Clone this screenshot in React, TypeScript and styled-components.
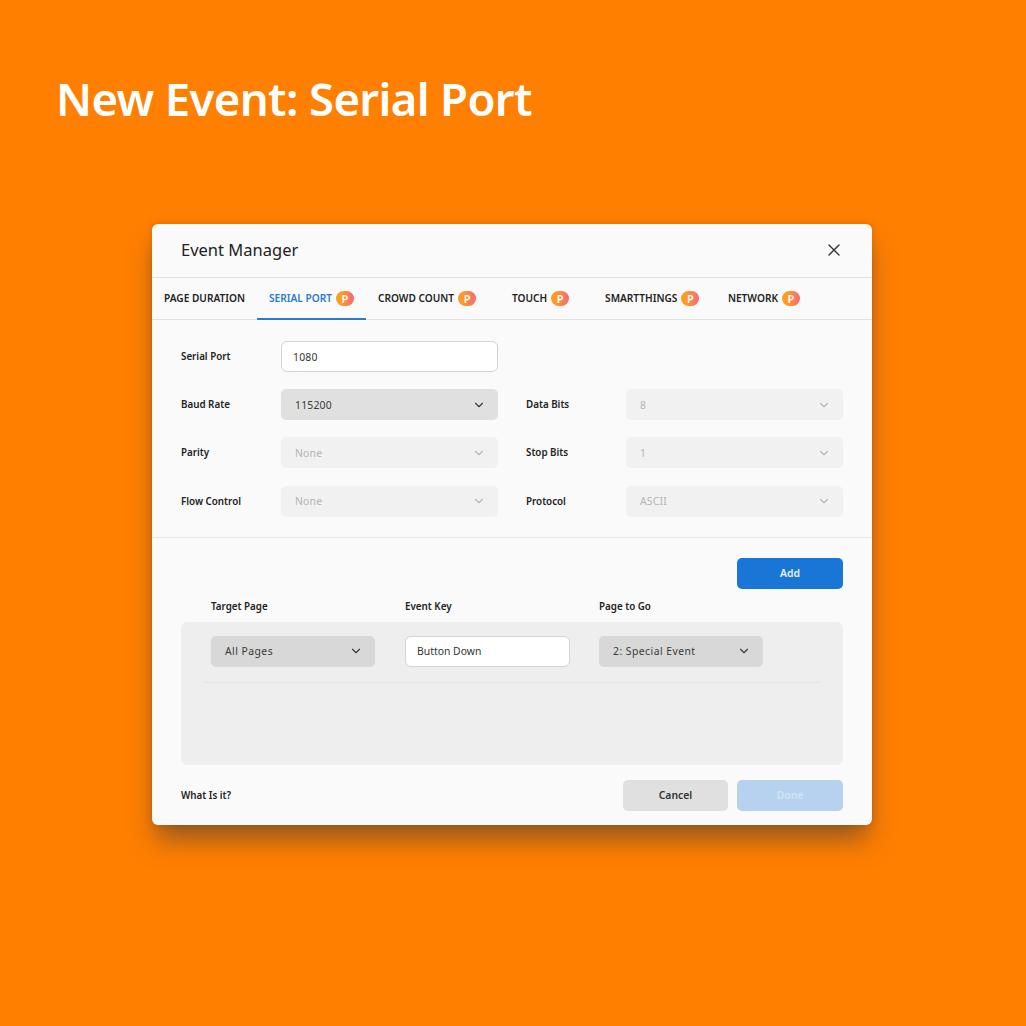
import React from 'react'
import styled, { createGlobalStyle } from 'styled-components'
import { ChevronDown, X } from 'lucide-react'

const FONT = `"Noto Sans", "Open Sans", sans-serif`

const GlobalStyle = createGlobalStyle`
  html, body {
    margin: 0;
    padding: 0;
    background: #ff7f00;
  }
  * {
    box-sizing: border-box;
  }
`

const Page = styled.div`
  width: 1026px;
  height: 1026px;
  overflow: hidden;
  background: #ff7f00;
  padding: 65px 0 0 56px;
  font-family: ${FONT};
`

const Title = styled.h1`
  margin: 0 0 92px;
  height: 67px;
  font-size: 45.5px;
  line-height: 66px;
  font-weight: 600;
  letter-spacing: -0.65px;
  color: #fff;
`

const Modal = styled.div`
  width: 720px;
  height: 601px;
  margin-left: 96px;
  background: #fafafa;
  border-radius: 6px;
  box-shadow: 0 18px 26px -4px rgba(80, 65, 50, 0.62), 0 0 6px rgba(120, 70, 0, 0.25);
  display: flex;
  flex-direction: column;
`

const Header = styled.div`
  height: 54px;
  padding: 0 28px 2px 29px;
  display: flex;
  align-items: center;
  justify-content: space-between;
  border-bottom: 1px solid #e2e2e2;
`

const ModalTitle = styled.div`
  font-size: 16.5px;
  font-weight: 400;
  color: #222;
`

const CloseIcon = styled(X)`
  width: 20px;
  height: 20px;
  color: #333;
  stroke-width: 1.6;
`

const TabBar = styled.div`
  height: 42px;
  display: flex;
  border-bottom: 1px solid #e2e2e2;
`

const Tab = styled.div<{ $active?: boolean }>`
  min-width: 105px;
  height: 42px;
  padding: 0 12px;
  display: flex;
  align-items: center;
  justify-content: center;
  gap: 4px;
  font-size: 10.15px;
  font-weight: 600;
  white-space: nowrap;
  color: ${({ $active }) => ($active ? '#2a7bd0' : '#222')};
  border-bottom: 2px solid ${({ $active }) => ($active ? '#2a7bd0' : 'transparent')};
`

const Badge = styled.span`
  width: 18px;
  height: 15px;
  border-radius: 8px;
  background: linear-gradient(90deg, #ff9a26 30%, #f8657c);
  color: #fff;
  font-size: 11px;
  font-weight: 600;
  display: flex;
  align-items: center;
  justify-content: center;
`

const Form = styled.div`
  padding: 21px 29px 20px;
  display: grid;
  grid-template-columns: 317px 317px;
  column-gap: 28px;
  grid-auto-rows: 31px;
  row-gap: 17.2px;
  border-bottom: 1px solid #e6e6e6;
`

const Field = styled.div`
  display: flex;
  align-items: center;
`

const FormLabel = styled.div`
  font-size: 9.8px;
  font-weight: 600;
  color: #222;
`

const Label = styled(FormLabel)`
  width: 100px;
`

const Input = styled.div<{ $narrow?: boolean }>`
  height: 31px;
  width: ${({ $narrow }) => ($narrow ? 165 : 217)}px;
  background: #fff;
  border: 1.5px solid #d4d4d4;
  border-radius: 6px;
  padding: 0 11px;
  display: flex;
  align-items: center;
  font-size: 10.4px;
  letter-spacing: ${({ $narrow }) => ($narrow ? 0 : 0.2)}px;
  color: #333;
`

const SelectBox = styled.div<{ $tone: 'active' | 'disabled' | 'row' }>`
  width: ${({ $tone }) => ($tone === 'row' ? 164 : 217)}px;
  height: 31px;
  border-radius: 5px;
  padding: 0 12px 0 14px;
  display: flex;
  align-items: center;
  justify-content: space-between;
  font-size: 10.4px;
  letter-spacing: ${({ $tone }) => ($tone === 'row' ? 0.45 : 0.2)}px;
  background: ${({ $tone }) =>
    $tone === 'active' ? '#e0e0e0' : $tone === 'row' ? '#d8d8d8' : '#f1f1f1'};
  color: ${({ $tone }) => ($tone === 'disabled' ? '#b4b4b4' : '#3a3a3a')};
`

const Chevron = styled(ChevronDown)<{ $muted?: boolean }>`
  width: 14px;
  height: 14px;
  stroke-width: 2;
  color: ${({ $muted }) => ($muted ? '#b8b8b8' : '#3c3c3c')};
`

const Lower = styled.div`
  flex: 1;
  padding: 20px 29px 14px;
  display: flex;
  flex-direction: column;
`

const AddRow = styled.div`
  display: flex;
  justify-content: flex-end;
`

const Button = styled.div<{ $variant: 'primary' | 'neutral' | 'disabled' }>`
  width: ${({ $variant }) => ($variant === 'neutral' ? 105 : 106)}px;
  height: 31px;
  border-radius: 5px;
  display: flex;
  align-items: center;
  justify-content: center;
  font-size: 10.4px;
  font-weight: 600;
  background: ${({ $variant }) =>
    $variant === 'primary' ? '#1976d6' : $variant === 'neutral' ? '#e0e0e0' : '#b6d2ee'};
  color: ${({ $variant }) =>
    $variant === 'primary' ? '#e8f2fc' : $variant === 'neutral' ? '#333' : '#d4e4f5'};
`

const TableColumns = styled.div`
  height: 33px;
  padding: 2px 0 0 30px;
  display: grid;
  grid-template-columns: 164px 164px 164px;
  column-gap: 30px;
  align-items: center;
`

const Panel = styled.div`
  height: 143px;
  background: #eeeeee;
  border-radius: 6px;
  padding: 14px 22px 0;
`

const PanelRow = styled.div`
  display: grid;
  grid-template-columns: 164px 164px 164px;
  column-gap: 30px;
  padding: 0 8px 15px;
  border-bottom: 1px solid #e5e5e5;
`

const Footer = styled.div`
  margin-top: 15px;
  display: flex;
  align-items: center;
  gap: 9px;
`

const Help = styled(FormLabel)`
  margin-right: auto;
`

const fields = [
  { label: 'Baud Rate', value: '115200', active: true },
  { label: 'Data Bits', value: '8' },
  { label: 'Parity', value: 'None' },
  { label: 'Stop Bits', value: '1' },
  { label: 'Flow Control', value: 'None' },
  { label: 'Protocol', value: 'ASCII' }
]

const tabs = [
  { name: 'PAGE DURATION', pro: false },
  { name: 'SERIAL PORT', pro: true, active: true },
  { name: 'CROWD COUNT', pro: true },
  { name: 'TOUCH', pro: true },
  { name: 'SMARTTHINGS', pro: true },
  { name: 'NETWORK', pro: true }
]

const App: React.FC = () => (
  <Page>
    <GlobalStyle />
    <Title>New Event: Serial Port</Title>
    <Modal>
      <Header>
        <ModalTitle>Event Manager</ModalTitle>
        <CloseIcon />
      </Header>
      <TabBar>
        {tabs.map(tab => (
          <Tab key={tab.name} $active={tab.active}>
            {tab.name}
            {tab.pro && <Badge>P</Badge>}
          </Tab>
        ))}
      </TabBar>
      <Form>
        <Field>
          <Label>Serial Port</Label>
          <Input>1080</Input>
        </Field>
        <span />
        {fields.map(field => (
          <Field key={field.label}>
            <Label>{field.label}</Label>
            <SelectBox $tone={field.active ? 'active' : 'disabled'}>
              {field.value}
              <Chevron $muted={!field.active} />
            </SelectBox>
          </Field>
        ))}
      </Form>
      <Lower>
        <AddRow>
          <Button $variant="primary">Add</Button>
        </AddRow>
        <TableColumns>
          <FormLabel>Target Page</FormLabel>
          <FormLabel>Event Key</FormLabel>
          <FormLabel>Page to Go</FormLabel>
        </TableColumns>
        <Panel>
          <PanelRow>
            <SelectBox $tone="row">
              All Pages
              <Chevron />
            </SelectBox>
            <Input $narrow>Button Down</Input>
            <SelectBox $tone="row">
              2: Special Event
              <Chevron />
            </SelectBox>
          </PanelRow>
        </Panel>
        <Footer>
          <Help>What Is it?</Help>
          <Button $variant="neutral">Cancel</Button>
          <Button $variant="disabled">Done</Button>
        </Footer>
      </Lower>
    </Modal>
  </Page>
)

export default App
